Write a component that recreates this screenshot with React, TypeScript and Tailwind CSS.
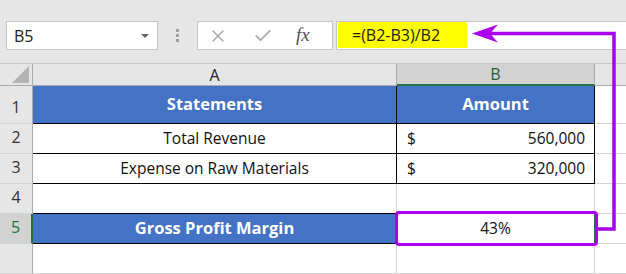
import { X, Check } from "lucide-react";

const font = { fontFamily: '"Open Sans", "Noto Sans", sans-serif' };

function RowHead({ n, h, selected }: { n: string; h: string; selected?: boolean }) {
  return (
    <div
      className={`${h} w-[33px] shrink-0 flex items-end justify-center pb-[4px] text-[16px] border-b border-[#d4d4d4] ${
        selected
          ? "bg-[#d2d2d2] text-[#217346] border-r-2 border-r-[#217346]"
          : "bg-[#e6e6e6] text-[#333] border-r border-r-[#ababab]"
      }`}
    >
      {n}
    </div>
  );
}

export default function App() {
  return (
    <div
      className="relative w-[626px] h-[274px] overflow-hidden bg-[#e6e6e6] text-[#111]"
      style={font}
    >
      {/* formula bar */}
      <div className="h-[63px] flex items-start pt-[21px]">
        <div className="ml-[6px] w-[152px] h-[29px] bg-white border border-[#c6c6c6] flex items-center justify-between pl-[7px] pr-[8px]">
          <span className="text-[16px] text-[#222]">B5</span>
          <span className="w-0 h-0 border-l-[4px] border-r-[4px] border-t-[4px] border-l-transparent border-r-transparent border-t-[#666]" />
        </div>
        <div className="w-[39px] h-[29px] flex flex-col items-center justify-center gap-[2px]">
          <span className="w-[3px] h-[3px] bg-[#a0a0a0]" />
          <span className="w-[3px] h-[3px] bg-[#a0a0a0]" />
          <span className="w-[3px] h-[3px] bg-[#a0a0a0]" />
        </div>
        <div className="w-[136px] h-[29px] bg-white border border-[#c6c6c6] flex items-center">
          <X className="ml-[10px] text-[#a6a6a6]" size={20} strokeWidth={1.6} />
          <Check className="ml-[25px] text-[#b3b3b3]" size={20} strokeWidth={2.4} />
          <span
            className="ml-[23px] text-[19px] italic text-[#555]"
            style={{ fontFamily: '"Liberation Serif", serif' }}
          >
            fx
          </span>
        </div>
        <div className="ml-[3px] flex-1 h-[29px] bg-white border-y border-l border-[#c6c6c6] pl-px flex items-start">
          <div className="w-[129px] h-[26px] bg-[#ffff00] flex items-center pl-[14px] text-[16px] text-[#222]">
            =(B2-B3)/B2
          </div>
        </div>
      </div>

      {/* column headers */}
      <div className="flex h-[23px] border-t border-[#c6c6c6]">
        <div className="w-[33px] shrink-0 border-r border-b border-[#ababab] flex items-end justify-end pr-[3px] pb-[2px]">
          <div className="w-0 h-0 border-l-[17px] border-l-transparent border-b-[17px] border-b-[#b3b3b3]" />
        </div>
        <div className="w-[364px] border-r border-b border-[#ababab] flex items-center justify-center text-[16px] text-[#222]">
          A
        </div>
        <div className="w-[198px] bg-[#d2d2d2] border-r border-[#ababab] border-b-2 border-b-[#217346] flex items-center justify-center text-[16px] text-[#1d5e3a]">
          B
        </div>
        <div className="flex-1 border-b border-[#ababab]" />
      </div>

      {/* row 1 */}
      <div className="flex">
        <RowHead n="1" h="h-[38px]" />
        <div className="w-[364px] h-[38px] bg-[#4472c4] border-r border-b border-black flex items-center justify-center text-white font-bold text-[16.5px]">
          Statements
        </div>
        <div className="w-[198px] h-[38px] bg-[#4472c4] border-r border-b border-black flex items-center justify-center text-white font-bold text-[16.5px]">
          Amount
        </div>
        <div className="flex-1 h-[38px] bg-white border-b border-[#d4d4d4]" />
      </div>

      {/* row 2 */}
      <div className="flex">
        <RowHead n="2" h="h-[30px]" />
        <div className="w-[364px] h-[30px] bg-white border-r border-b border-black flex items-center justify-center text-[15.5px]">
          Total Revenue
        </div>
        <div className="w-[198px] h-[30px] bg-white border-r border-b border-black flex items-center justify-between pl-[10px] pr-[9px] text-[15.5px]">
          <span>$</span>
          <span>560,000</span>
        </div>
        <div className="flex-1 h-[30px] bg-white border-b border-[#d4d4d4]" />
      </div>

      {/* row 3 */}
      <div className="flex">
        <RowHead n="3" h="h-[30px]" />
        <div className="w-[364px] h-[30px] bg-white border-r border-b border-black flex items-center justify-center text-[15.5px]">
          Expense on Raw Materials
        </div>
        <div className="w-[198px] h-[30px] bg-white border-r border-b border-black flex items-center justify-between pl-[10px] pr-[9px] text-[15.5px]">
          <span>$</span>
          <span>320,000</span>
        </div>
        <div className="flex-1 h-[30px] bg-white border-b border-[#d4d4d4]" />
      </div>

      {/* row 4 */}
      <div className="flex">
        <RowHead n="4" h="h-[30px]" />
        <div className="w-[364px] h-[30px] bg-white border-r border-r-[#d4d4d4] border-b border-b-black" />
        <div className="w-[198px] h-[30px] bg-white border-r border-b border-[#d4d4d4]" />
        <div className="flex-1 h-[30px] bg-white border-b border-[#d4d4d4]" />
      </div>

      {/* row 5 */}
      <div className="flex">
        <RowHead n="5" h="h-[30px]" selected />
        <div className="w-[364px] h-[30px] bg-[#4472c4] border-r border-b border-black flex items-center justify-center text-white font-bold text-[16.5px]">
          Gross Profit Margin
        </div>
        <div className="w-[198px] h-[30px] bg-white border-r border-b border-[#217346] flex items-center justify-center text-[15.5px]">
          43%
        </div>
        <div className="flex-1 h-[30px] bg-white border-b border-[#d4d4d4]" />
      </div>

      {/* row 6 */}
      <div className="flex">
        <RowHead n="" h="h-[30px]" />
        <div className="w-[364px] h-[30px] bg-white border-r border-b border-[#d4d4d4]" />
        <div className="w-[198px] h-[30px] bg-white border-r border-b border-[#d4d4d4]" />
        <div className="flex-1 h-[30px] bg-white border-b border-[#d4d4d4]" />
      </div>

      {/* highlight box on B5 */}
      <div className="absolute left-[395px] top-[211px] w-[203px] h-[35px] rounded-[4px] border-[3.5px] border-[#aa00ee]" />

      {/* arrow from B5 to formula */}
      <svg className="absolute left-0 top-0 pointer-events-none" width="626" height="274">
        <path d="M490 33.5 H614 V229 H598" fill="none" stroke="#aa00ee" strokeWidth="3.5" />
        <polygon points="472,33.5 498,24.5 490,33.5 498,42.5" fill="#aa00ee" />
      </svg>
    </div>
  );
}
